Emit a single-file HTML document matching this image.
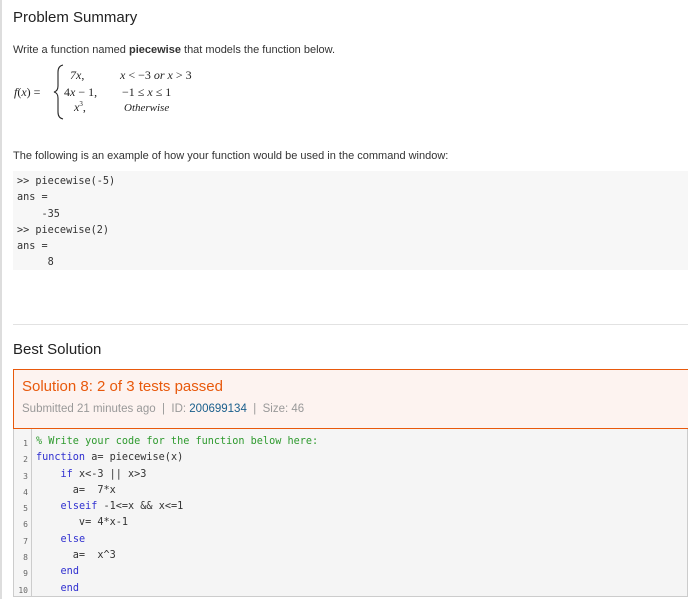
<!DOCTYPE html>
<html><head><style>
*{margin:0;padding:0;box-sizing:border-box}
body{width:688px;height:599px;overflow:hidden;background:#fff;font-family:"Liberation Sans",sans-serif;color:#333;position:relative}
.lb{position:absolute;left:0;top:0;width:2px;height:599px;background:#ddd}
.a{position:absolute;white-space:pre}
h2{position:absolute;left:13px;font-weight:normal;font-size:15px;color:#222}
.m{font-family:"Liberation Serif",serif;font-size:12px;color:#222}
.mono{font-family:"DejaVu Sans Mono","Liberation Mono",monospace;font-size:10.2px;color:#333}
.ex{position:absolute;left:13px;top:171px;width:675px;height:99px;background:#f7f7f7}
.code{position:absolute;left:13px;top:429px;width:675px;height:168px;background:#f5f5f5;border:1px solid #ccc;border-top:none}
.gut{position:absolute;left:0;top:0;width:18px;height:100%;border-right:1px solid #ccc}
.ln{position:absolute;left:0;width:14px;text-align:right;font-family:"DejaVu Sans Mono",monospace;font-size:8px;color:#666}
.k{color:#3030d0}.c{color:#2e9a2e}
</style></head><body>
<div class="lb"></div>
<h2 style="top:9px">Problem Summary</h2>
<div class="a" style="left:13px;top:44px;font-size:11px">Write a function named <b>piecewise</b> that models the function below.</div>
<div class="a m" style="left:14px;top:85px"><i>f</i>(<i>x</i>) =</div>
<svg style="position:absolute;left:52px;top:64px" width="14" height="56"><path d="M11 1 Q6 2 6 8 L6 22 Q6 27 2 28 Q6 29 6 34 L6 48 Q6 54 11 55" fill="none" stroke="#222" stroke-width="1.1"/></svg>
<div class="a m" style="left:70px;top:68px"><i>7x</i>,</div>
<div class="a m" style="left:64px;top:85px">4<i>x</i> − 1,</div>
<div class="a m" style="left:74px;top:100px"><i>x</i><sup style="font-size:7px">3</sup>,</div>
<div class="a m" style="left:120px;top:68px"><i>x</i> &lt; −3 <i>or x</i> &gt; 3</div>
<div class="a m" style="left:122px;top:85px">−1 ≤ <i>x</i> ≤ 1</div>
<div class="a m" style="left:124px;top:102px;font-size:11px"><i>Otherwise</i></div>
<div class="a" style="left:13px;top:150px;font-size:11px">The following is an example of how your function would be used in the command window:</div>
<div class="ex"></div>
<div class="a mono" style="left:17px;top:174px;line-height:16.3px">&gt;&gt; piecewise(-5)
ans =
    -35
&gt;&gt; piecewise(2)
ans =
     8</div>
<div style="position:absolute;left:13px;top:324px;width:675px;height:1px;background:#e2e2e2"></div>
<h2 style="top:341px">Best Solution</h2>
<div style="position:absolute;left:13px;top:369px;width:675px;height:60px;background:#fdf3f0;border:1px solid #e8590c;border-right:none"></div>
<div class="a" style="left:22px;top:378px;font-size:15px;color:#e8590c">Solution 8: 2 of 3 tests passed</div>
<div class="a" style="left:22px;top:403px;font-size:11.5px;color:#999">Submitted 21 minutes ago  |  ID: <span style="color:#1a5f8c">200699134</span>  |  Size: 46</div>
<div class="code"><div class="gut"></div>
<div class="ln" style="top:7px;line-height:16.3px;white-space:pre">1
2
3
4
5
6
7
8
9
10</div>
<div class="a mono" style="left:22px;top:5px;line-height:16.3px"><span class="c">% Write your code for the function below here:</span>
<span class="k">function</span> a= piecewise(x)
    <span class="k">if</span> x&lt;-3 || x&gt;3
      a=  7*x
    <span class="k">elseif</span> -1&lt;=x &amp;&amp; x&lt;=1
       v= 4*x-1
    <span class="k">else</span>
      a=  x^3
    <span class="k">end</span>
    <span class="k">end</span></div>
</div>
</body></html>
